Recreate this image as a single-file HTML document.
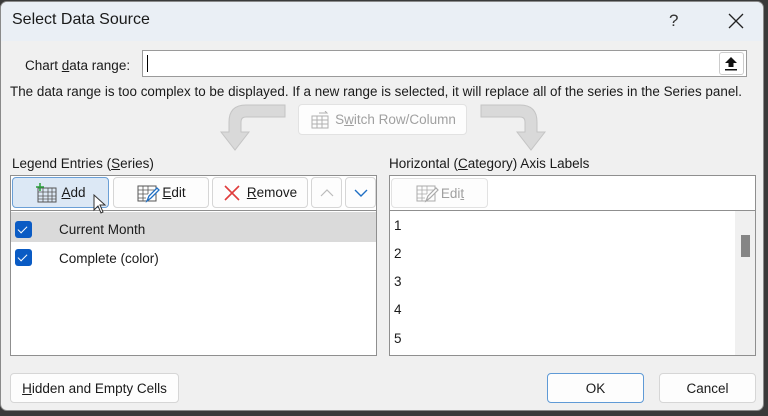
<!DOCTYPE html>
<html><head><style>
*{box-sizing:border-box;margin:0;padding:0}
body{width:768px;height:416px;background:#3a3a3a;font-family:"Liberation Sans",sans-serif;font-size:13px;color:#1a1a1a;position:relative;overflow:hidden}
.dlg{position:absolute;left:0;top:1px;width:764px;height:410px;background:#f0f0f0;border:1px solid #8a8a8a;border-radius:7px;overflow:hidden}
.title{position:absolute;left:0;top:0;width:100%;height:39px;background:#eaeff5}
.abs{position:absolute;white-space:nowrap}
.btn{position:absolute;background:#fdfdfd;border:1px solid #d6d6d6;border-radius:4px;display:flex;align-items:center;justify-content:center;font-size:13.5px}
.panel{position:absolute;background:#fff;border:1px solid #8f8f8f}
.cb{position:absolute;width:17px;height:17px;background:#0a5bc4;border-radius:3px}
.cb:after{content:"";position:absolute;left:5px;top:3px;width:4px;height:8px;border:solid #fff;border-width:0 1.5px 1.5px 0;transform:rotate(45deg)}
u{text-decoration:underline}
</style></head><body>
<div class="dlg">
<div class="title"></div>
<div class="abs" style="left:11px;top:9px;font-size:16px">Select Data Source</div>
<div class="abs" style="left:668px;top:9px;font-size:17px;color:#333">?</div>
<svg class="abs" style="left:727px;top:11px" width="16" height="16"><path d="M1 1L15 15M15 1L1 15" stroke="#222" stroke-width="1.3"/></svg>
<div class="abs" style="left:24px;top:56px;font-size:13.5px">Chart <u>d</u>ata range:</div>
<div class="abs" style="left:141px;top:48px;width:605px;height:27px;background:#fff;border:1px solid #9a9a9a"></div>
<div class="abs" style="left:146px;top:53px;width:1px;height:17px;background:#000"></div>
<div class="abs" style="left:718px;top:50px;width:25px;height:23px;background:#fff;border:1px solid #ccc;border-radius:3px"></div>
<svg class="abs" style="left:723px;top:53px" width="14" height="17"><path d="M7 2L1 8H4.5V12H9.5V8H13Z" fill="#111"/><rect x="1" y="14" width="12" height="1.5" fill="#111"/></svg>
<div class="abs" style="left:9px;top:82px;font-size:13.4px;letter-spacing:0.02px">The data range is too complex to be displayed. If a new range is selected, it will replace all of the series in the Series panel.</div>
<svg class="abs" style="left:200px;top:100px" width="90" height="50"><path d="M84 3H45Q28 3 28 20V30H20L34 48L48 30H40V20Q40 15 45 15H84Z" fill="#d9d9d9" stroke="#c4c4c4"/></svg>
<svg class="abs" style="left:476px;top:100px" width="90" height="50"><path d="M4 3H43Q60 3 60 20V30H68L54 48L40 30H48V20Q48 15 43 15H4Z" fill="#d9d9d9" stroke="#c4c4c4"/></svg>
<div class="btn" style="left:297px;top:102px;width:169px;height:31px;color:#a0a0a0;border-color:#e2e2e2">
<svg width="22" height="18" style="margin-right:4px"><rect x="3" y="5" width="16" height="12" fill="none" stroke="#b0b0b0"/><path d="M3 9H19M3 13H19M8 5V17M13 5V17" stroke="#b0b0b0"/><path d="M10 2H18L16 0" fill="none" stroke="#b0b0b0"/></svg>S<u>w</u>itch Row/Column</div>
<div class="abs" style="left:11px;top:154px;font-size:13.5px">Legend Entries (<u>S</u>eries)</div>
<div class="abs" style="left:388px;top:154px;font-size:13.5px">Horizontal (<u>C</u>ategory) Axis Labels</div>
<div class="panel" style="left:9px;top:173px;width:367px;height:181px">
<div class="abs" style="left:0;top:34px;width:365px;height:1px;background:#8f8f8f"></div>
<div class="abs" style="left:0;top:36px;width:365px;height:30px;background:#dadada"></div>
<div class="cb" style="left:4px;top:45px"></div>
<div class="abs" style="left:48px;top:46px;font-size:13.5px">Current Month</div>
<div class="cb" style="left:4px;top:73px"></div>
<div class="abs" style="left:48px;top:75px;font-size:13.5px">Complete (color)</div>
</div>
<div class="btn" style="left:11px;top:175px;width:97px;height:31px;background:#dce8f5;border-color:#6a9fd6">
<svg width="24" height="20" style="margin-right:2px"><rect x="3" y="5" width="18" height="14" fill="none" stroke="#555"/><path d="M3 9H21M3 13H21M3 16H21M8 5V19M13 5V19M17 5V19" stroke="#555" stroke-width=".8"/><path d="M5 0V8M1 4H9" stroke="#2a9d3a" stroke-width="1.5"/></svg><u>A</u>dd</div>
<svg class="abs" style="left:92px;top:192px" width="16" height="22"><path d="M1 1V16L5 12L8 19L10 18L7 11H12Z" fill="#fff" stroke="#333"/></svg>
<div class="btn" style="left:112px;top:175px;width:96px;height:31px">
<svg width="24" height="20" style="margin-right:2px"><rect x="2" y="3" width="18" height="15" fill="none" stroke="#555"/><path d="M2 7H20M2 11H12M2 15H10M7 3V18M12 3V11" stroke="#555" stroke-width=".8"/><path d="M11 18L13 13L21 5L23 7L15 15Z" fill="#fff" stroke="#1f6fc4" stroke-width="1.3"/></svg><u>E</u>dit</div>
<div class="btn" style="left:211px;top:175px;width:96px;height:31px">
<svg width="18" height="18" style="margin-right:6px"><path d="M2 2L16 16M16 2L2 16" stroke="#e03c3c" stroke-width="1.6"/></svg><u>R</u>emove</div>
<div class="btn" style="left:310px;top:175px;width:31px;height:31px"><svg width="14" height="8"><path d="M1 7L7 1L13 7" fill="none" stroke="#bbb" stroke-width="1.2"/></svg></div>
<div class="btn" style="left:344px;top:175px;width:31px;height:31px"><svg width="14" height="8"><path d="M1 1L7 7L13 1" fill="none" stroke="#1f6fc4" stroke-width="1.4"/></svg></div>
<div class="panel" style="left:388px;top:173px;width:367px;height:181px">
<div class="abs" style="left:0;top:34px;width:365px;height:1px;background:#8f8f8f"></div>
<div class="abs" style="left:345px;top:35px;width:20px;height:144px;background:#f0f0f0"></div>
<div class="abs" style="left:351px;top:59px;width:9px;height:22px;background:#858585"></div>
<div class="abs" style="left:4px;top:42px;font-size:13.5px">1</div>
<div class="abs" style="left:4px;top:70px;font-size:13.5px">2</div>
<div class="abs" style="left:4px;top:98px;font-size:13.5px">3</div>
<div class="abs" style="left:4px;top:126px;font-size:13.5px">4</div>
<div class="abs" style="left:4px;top:155px;font-size:13.5px">5</div>
</div>
<div class="btn" style="left:390px;top:176px;width:97px;height:30px;color:#a0a0a0;border-color:#e2e2e2">
<svg width="24" height="20" style="margin-right:2px"><rect x="2" y="3" width="18" height="15" fill="none" stroke="#aaa"/><path d="M2 7H20M2 11H12M2 15H10M7 3V18M12 3V11" stroke="#aaa" stroke-width=".8"/><path d="M11 18L13 13L21 5L23 7L15 15Z" fill="#fff" stroke="#aaa" stroke-width="1.2"/></svg>Edi<u>t</u></div>
<div class="btn" style="left:9px;top:371px;width:169px;height:30px"><u>H</u>idden and Empty Cells</div>
<div class="btn" style="left:546px;top:371px;width:97px;height:30px;border-color:#5f9ad6">OK</div>
<div class="btn" style="left:658px;top:371px;width:97px;height:30px">Cancel</div>
</div>
</body></html>
